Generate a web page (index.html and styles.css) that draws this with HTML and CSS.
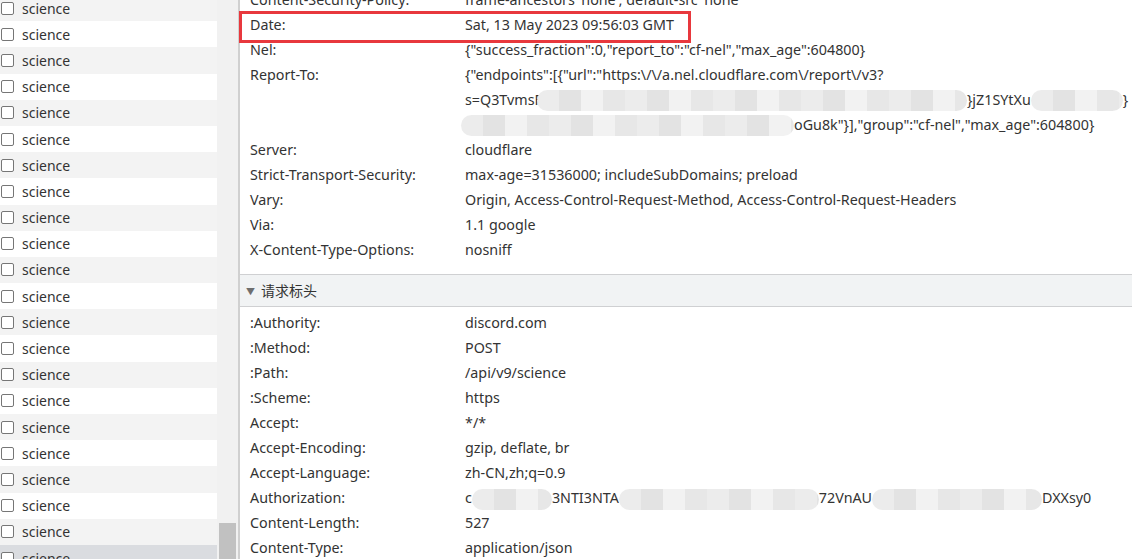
FILE: index.html
```html
<!DOCTYPE html>
<html lang="zh-CN">
<head>
    <meta charset="UTF-8">
    <title>Headers</title>
    <link rel="stylesheet" href="styles.css">
</head>
<body>
    <div class="page">
        <div class="list">
            <div class="row"><span class="check"></span>science</div>
            <div class="row"><span class="check"></span>science</div>
            <div class="row"><span class="check"></span>science</div>
            <div class="row"><span class="check"></span>science</div>
            <div class="row"><span class="check"></span>science</div>
            <div class="row"><span class="check"></span>science</div>
            <div class="row"><span class="check"></span>science</div>
            <div class="row"><span class="check"></span>science</div>
            <div class="row"><span class="check"></span>science</div>
            <div class="row"><span class="check"></span>science</div>
            <div class="row"><span class="check"></span>science</div>
            <div class="row"><span class="check"></span>science</div>
            <div class="row"><span class="check"></span>science</div>
            <div class="row"><span class="check"></span>science</div>
            <div class="row"><span class="check"></span>science</div>
            <div class="row"><span class="check"></span>science</div>
            <div class="row"><span class="check"></span>science</div>
            <div class="row"><span class="check"></span>science</div>
            <div class="row"><span class="check"></span>science</div>
            <div class="row"><span class="check"></span>science</div>
            <div class="row"><span class="check"></span>science</div>
            <div class="row selected"><span class="check"></span>science</div>
        </div>
        <div class="scrollbar"><div class="thumb"></div></div>
        <div class="splitter"></div>

        <div class="details">
            <div class="headers">
                <div class="hrow"><span class="name">Content-Security-Policy:</span><span class="value">frame-ancestors 'none'; default-src 'none'</span></div>
                <div class="hrow"><span class="name">Date:</span><span class="value">Sat, 13 May 2023 09:56:03 GMT</span></div>
                <div class="hrow"><span class="name">Nel:</span><span class="value">{"success_fraction":0,"report_to":"cf-nel","max_age":604800}</span></div>
                <div class="hrow">
                    <span class="name">Report-To:</span>
                    <span class="value">
                        <span class="line">{"endpoints":[{"url":"https:\/\/a.nel.cloudflare.com\/report\/v3?</span>
                        <span class="line">s=Q3TvmsF<span class="blur b-long"></span>}jZ1SYtXu<span class="blur b-short"></span>}</span>
                        <span class="line"><span class="blur b-lead"></span>oGu8k"}],"group":"cf-nel","max_age":604800}</span>
                    </span>
                </div>
                <div class="hrow"><span class="name">Server:</span><span class="value">cloudflare</span></div>
                <div class="hrow"><span class="name">Strict-Transport-Security:</span><span class="value">max-age=31536000; includeSubDomains; preload</span></div>
                <div class="hrow"><span class="name">Vary:</span><span class="value">Origin, Access-Control-Request-Method, Access-Control-Request-Headers</span></div>
                <div class="hrow"><span class="name">Via:</span><span class="value">1.1 google</span></div>
                <div class="hrow"><span class="name">X-Content-Type-Options:</span><span class="value">nosniff</span></div>
            </div>

            <div class="section-title"><span class="arrow">▼</span>请求标头</div>

            <div class="headers request">
                <div class="hrow"><span class="name">:Authority:</span><span class="value">discord.com</span></div>
                <div class="hrow"><span class="name">:Method:</span><span class="value">POST</span></div>
                <div class="hrow"><span class="name">:Path:</span><span class="value">/api/v9/science</span></div>
                <div class="hrow"><span class="name">:Scheme:</span><span class="value">https</span></div>
                <div class="hrow"><span class="name">Accept:</span><span class="value">*/*</span></div>
                <div class="hrow"><span class="name">Accept-Encoding:</span><span class="value">gzip, deflate, br</span></div>
                <div class="hrow"><span class="name">Accept-Language:</span><span class="value">zh-CN,zh;q=0.9</span></div>
                <div class="hrow"><span class="name">Authorization:</span><span class="value">c<span class="blur b-a1"></span>3NTI3NTA<span class="blur b-a2"></span>72VnAU<span class="blur b-a3"></span>DXXsy0</span></div>
                <div class="hrow"><span class="name">Content-Length:</span><span class="value">527</span></div>
                <div class="hrow"><span class="name">Content-Type:</span><span class="value">application/json</span></div>
            </div>

            <div class="highlight"></div>
        </div>
    </div>
</body>
</html>
```

FILE: styles.css
```css
body {
    margin: 0;
    font-family: "Noto Sans", "Noto Sans CJK SC", sans-serif;
    font-size: 14px;
    color: #333;
    background: #fff;
    overflow: hidden;
}
.page {
    display: flex;
    height: 559px;
    overflow: hidden;
}

/* left request list */
.list {
    width: 217px;
    margin-top: -5px;
    flex-shrink: 0;
}
.row {
    height: 26.2px;
    display: flex;
    align-items: center;
    background-color: #fff;
}
.row:nth-child(odd) {
    background-color: #f3f3f3;
}
.row.selected {
    background-color: #dadce0;
}
.check {
    width: 13px;
    height: 13px;
    box-sizing: border-box;
    border: 1px solid #767676;
    border-radius: 2px;
    margin: 0 8px 0 1px;
    background: #fff;
}
.scrollbar {
    width: 21px;
    flex-shrink: 0;
    background-color: #f1f1f1;
}
.thumb {
    margin: 523px 2px 0;
    height: 60px;
    background-color: #c1c1c1;
}
.splitter {
    width: 2px;
    flex-shrink: 0;
    background-color: #d0d0d0;
}

/* right headers panel */
.details {
    flex: 1;
    position: relative;
    min-width: 0;
    font-size: 14.3px;
}
.headers {
    margin-top: -13.5px;
    padding-bottom: 12.5px;
}
.headers.request {
    margin-top: 0;
    padding-top: 3px;
}
.hrow {
    display: flex;
    line-height: 25px;
    padding-left: 10px;
    white-space: nowrap;
}
.name {
    width: 215px;
    flex-shrink: 0;
}
.line {
    display: block;
}
.section-title {
    height: 31px;
    line-height: 31px;
    border-top: 1px solid #cfd0d2;
    border-bottom: 1px solid #cfd0d2;
    background-color: #f1f3f4;
    padding-left: 6px;
    font-size: 14px;
}
.arrow {
    font-size: 9px;
    color: #6e6e6e;
    margin-right: 6px;
    vertical-align: 1px;
}

/* redacted parts */
.blur {
    display: inline-block;
    height: 21px;
    vertical-align: middle;
    border-radius: 11px;
    background: repeating-linear-gradient(90deg, #ececec 0 22px, #e3e3e3 22px 44px, #f2f2f2 44px 66px, #e7e7e7 66px 88px);
}
.b-long { width: 430px; margin-left: -5px; }
.b-short { width: 92px; }
.b-lead { width: 333px; margin-left: -4px; }
.b-a1 { width: 80px; }
.b-a2 { width: 200px; }
.b-a3 { width: 170px; }

.highlight {
    position: absolute;
    left: -1px;
    top: 11px;
    width: 452px;
    height: 32px;
    box-sizing: border-box;
    border: 3px solid #e8383d;
}
```
